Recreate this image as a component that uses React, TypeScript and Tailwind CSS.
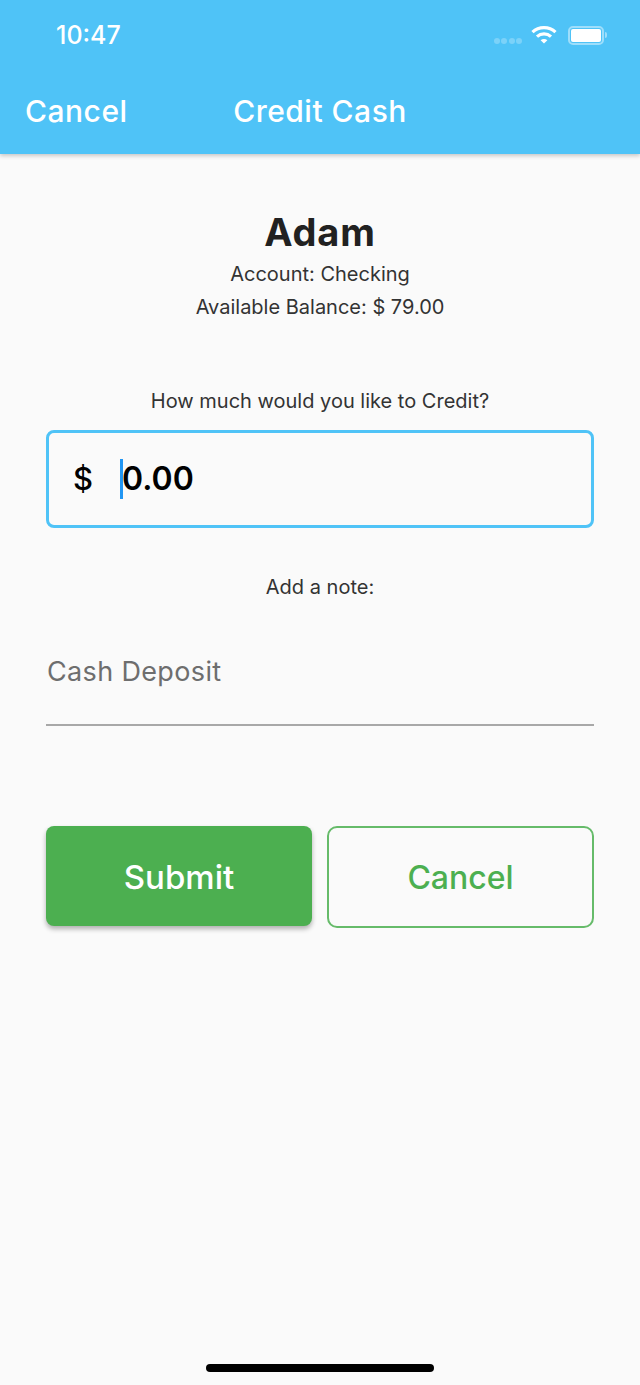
import React from "react";

function Wifi() {
  return (
    <svg width="26" height="20" viewBox="0 0 26 20" fill="none" stroke="white" strokeWidth="3.2">
      <path d="M1.5 7.2C7.8 1.2 18.2 1.2 24.5 7.2" />
      <path d="M6 11.6C10 8 16 8 20 11.6" />
      <path d="M13 18.6 9.6 15.2C11.6 13.6 14.4 13.6 16.4 15.2Z" fill="white" stroke="none" />
    </svg>
  );
}

function StatusBar() {
  return (
    <div className="h-[70px] flex items-center justify-between pl-[56px] pr-[33px]">
      <span className="text-[25px] font-medium text-white pt-[1px]">10:47</span>
      <div className="flex items-center">
        <div className="flex gap-[1.5px] mt-[12px] mr-[9px]">
          <div className="w-[6px] h-[6px] rounded-full bg-white/25" />
          <div className="w-[6px] h-[6px] rounded-full bg-white/25" />
          <div className="w-[6px] h-[6px] rounded-full bg-white/25" />
          <div className="w-[6px] h-[6px] rounded-full bg-white/25" />
        </div>
        <Wifi />
        <div className="ml-[11px] w-[36px] h-[19px] rounded-[5px] border-2 border-white/45 p-[1px]">
          <div className="w-full h-full bg-white rounded-[2px]" />
        </div>
        <div className="w-[2px] h-[6px] bg-white/45 rounded-r-sm ml-[1px]" />
      </div>
    </div>
  );
}

function AppBar() {
  return (
    <div className="bg-[#4fc3f7] h-[154px] shadow-[0_2px_4px_rgba(0,0,0,0.2)] relative">
      <StatusBar />
      <div className="relative flex items-center justify-center h-[84px] pb-[2px] text-[30px] text-white font-medium tracking-[0.5px]">
        <span className="absolute left-[25px]">Cancel</span>
        <span>Credit Cash</span>
      </div>
    </div>
  );
}

export default function App() {
  return (
    <div className="w-[640px] h-[1385px] bg-[#fafafa] flex flex-col overflow-hidden font-['Inter',sans-serif] text-[#333333]">
      <AppBar />

      <div className="flex-1 px-[46px] flex flex-col items-center">
        <h1 className="mt-[54px] h-[48px] leading-[48px] text-[38px] font-bold text-[#212121] tracking-[0.8px]">Adam</h1>
        <p className="mt-[2px] h-[33px] leading-[33px] text-[20px]">Account: Checking</p>
        <p className="h-[33px] leading-[33px] text-[20px]">Available Balance: $ 79.00</p>

        <p className="mt-[61px] h-[33px] leading-[33px] text-[20px]">How much would you like to Credit?</p>
        <div className="mt-[12px] w-full h-[98px] rounded-[8px] border-[3px] border-[#4fc3f7] flex items-center pl-[24px]">
          <span className="text-[31px] font-medium text-black w-[47px]">$</span>
          <div className="w-[3px] h-[40px] bg-[#2196f3]" />
          <span className="text-[32px] font-semibold text-black -ml-[1px]">0.00</span>
        </div>

        <p className="mt-[43px] h-[33px] leading-[33px] text-[20px]">Add a note:</p>

        <div className="mt-[48px] w-full h-[74px] pl-[1px] border-b-2 border-[#a8a8a8] text-[27px] text-[#6e6e6e] leading-[40px] tracking-[0.35px]">
          Cash Deposit
        </div>

        <div className="mt-[100px] w-full flex gap-[15px]">
          <button className="w-[266px] h-[100px] pt-[3px] rounded-[8px] bg-[#4caf50] text-white text-[33px] font-medium shadow-[0_3px_5px_rgba(0,0,0,0.3)]">
            Submit
          </button>
          <button className="flex-1 h-[102px] pt-[1px] rounded-[10px] border-2 border-[#66bb6a] text-[#4caf50] text-[32px] font-medium">
            Cancel
          </button>
        </div>
      </div>

      <div className="h-[21px] flex justify-center">
        <div className="w-[228px] h-[8px] rounded-full bg-black" />
      </div>
    </div>
  );
}
